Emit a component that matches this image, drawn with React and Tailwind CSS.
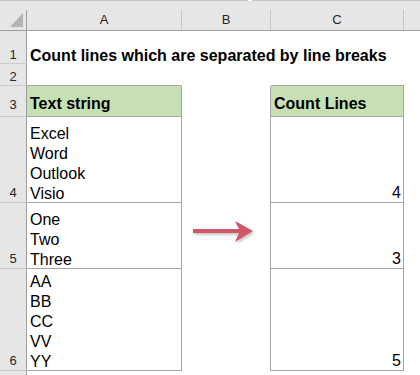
const FONT = "font-['Liberation_Sans',Arial,sans-serif]"

// column widths incl. right gridline
const HEAD_W = 'w-[27px]'
const A_W = 'w-[155px]'
const B_W = 'w-[89px]'
const C_W = 'w-[133px]'

function RowHead({ n, pad = 'pb-[1px]' }) {
  return (
    <div className={`${HEAD_W} shrink-0 bg-[#e6e6e6] border-r border-b border-r-[#9e9e9e] border-b-[#cacaca] flex items-end justify-center ${pad} text-[13px] leading-[15px] text-[#262626]`}>
      {n}
    </div>
  )
}

function Lines({ items }) {
  return (
    <div className="flex flex-col -mb-[2px]">
      {items.map((t) => (
        <span key={t} className="leading-[20px]">{t}</span>
      ))}
    </div>
  )
}

function DataRow({ n, h, items, count }) {
  return (
    <div className={`flex ${h}`}>
      <RowHead n={n} pad="pb-[2px]" />
      <div className={`${A_W} shrink-0 border-r border-b border-[#a6a6a6] flex items-end pl-[3px] text-[16px] text-black`}>
        <Lines items={items} />
      </div>
      <div className={`${B_W} shrink-0 border-r border-[#a6a6a6]`} />
      <div className={`${C_W} shrink-0 border-r border-b border-[#a6a6a6] flex items-end justify-end pr-[2px] text-[16px] leading-[20px] text-black`}>
        <span className="-mb-[1px]">{count}</span>
      </div>
      <div className="flex-1" />
    </div>
  )
}

function ColHeader() {
  return (
    <div className="flex flex-col">
      <div className="h-[1px] flex">
        <div className="w-[248px] bg-[#c4c4c4]" />
        <div className="w-[4px] bg-white" />
        <div className="flex-1 bg-[#c4c4c4]" />
      </div>
      <div className="h-[9px] bg-[#e6e6e6]" />
      <div className="flex h-[21px] bg-[#e6e6e6] border-b border-[#9e9e9e] text-[13px] leading-[20px] text-[#262626]">
        <div className={`${HEAD_W} shrink-0 border-r border-[#9e9e9e] relative`}>
          <svg className="absolute left-[10px] top-[3px]" width="13" height="14" viewBox="0 0 13 14">
            <polygon points="13,0 13,14 0,14" fill="#b4b4b4" />
          </svg>
        </div>
        <div className={`${A_W} shrink-0 border-r border-[#c6c6c6] text-center`}>A</div>
        <div className={`${B_W} shrink-0 border-r border-[#c6c6c6] text-center`}>B</div>
        <div className={`${C_W} shrink-0 border-r border-[#c6c6c6] text-center`}>C</div>
        <div className="flex-1" />
      </div>
    </div>
  )
}

function Arrow() {
  return (
    <svg className="absolute left-[188px] top-[216px]" width="72" height="32" viewBox="0 0 72 32">
      <defs>
        <filter id="soft" x="-20%" y="-40%" width="140%" height="180%">
          <feGaussianBlur stdDeviation="1.2" />
        </filter>
      </defs>
      <g transform="translate(1.5,2)" fill="#9a9a9a" opacity="0.55" filter="url(#soft)">
        <polygon points="5,13 51,13 47,5 65,15 47,26 51,17 5,17" />
      </g>
      <polygon points="5,13 51,13 47,5 65,15 47,26 51,17 5,17" fill="#d0566a" />
    </svg>
  )
}

export default function App() {
  return (
    <div className={`relative w-[420px] h-[375px] overflow-hidden bg-white ${FONT}`}>
      <ColHeader />

      {/* row 1: title */}
      <div className="flex h-[33px]">
        <RowHead n="1" pad="pb-[1px]" />
        <div className="flex-1 flex items-end pl-[3px] text-[16px] leading-[18px] font-bold text-black whitespace-nowrap">
          <span className="-mb-[1px]">Count lines which are separated by line breaks</span>
        </div>
      </div>

      {/* row 2: spacer, draws the tables' top edges */}
      <div className="flex h-[22px]">
        <RowHead n="2" pad="pb-[1px]" />
        <div className={`${A_W} shrink-0 border-r border-b border-r-transparent border-b-[#a6a6a6]`} />
        <div className={`${B_W} shrink-0 border-r border-transparent`} />
        <div className={`${C_W} shrink-0 border-b border-[#a6a6a6]`} />
        <div className="flex-1" />
      </div>

      {/* row 3: green headers */}
      <div className="flex h-[31px]">
        <RowHead n="3" pad="pb-[4px]" />
        <div className={`${A_W} shrink-0 bg-[#c6e0b4] border-r border-b border-[#a6a6a6] flex items-end pl-[3px] pb-[2px] text-[16px] leading-[20px] font-bold text-black`}>
          Text string
        </div>
        <div className={`${B_W} shrink-0 border-r border-[#a6a6a6]`} />
        <div className={`${C_W} shrink-0 bg-[#c6e0b4] border-r border-b border-[#a6a6a6] flex items-end pl-[3px] pb-[2px] text-[16px] leading-[20px] font-bold text-black`}>
          Count Lines
        </div>
        <div className="flex-1" />
      </div>

      <DataRow n="4" h="h-[86px]" items={['Excel', 'Word', 'Outlook', 'Visio']} count="4" />
      <DataRow n="5" h="h-[66px]" items={['One', 'Two', 'Three']} count="3" />
      <DataRow n="6" h="h-[102px]" items={['AA', 'BB', 'CC', 'VV', 'YY']} count="5" />

      <div className="flex h-[20px]">
        <div className={`${HEAD_W} shrink-0 bg-[#e6e6e6] border-r border-[#9e9e9e]`} />
      </div>

      <Arrow />
    </div>
  )
}
